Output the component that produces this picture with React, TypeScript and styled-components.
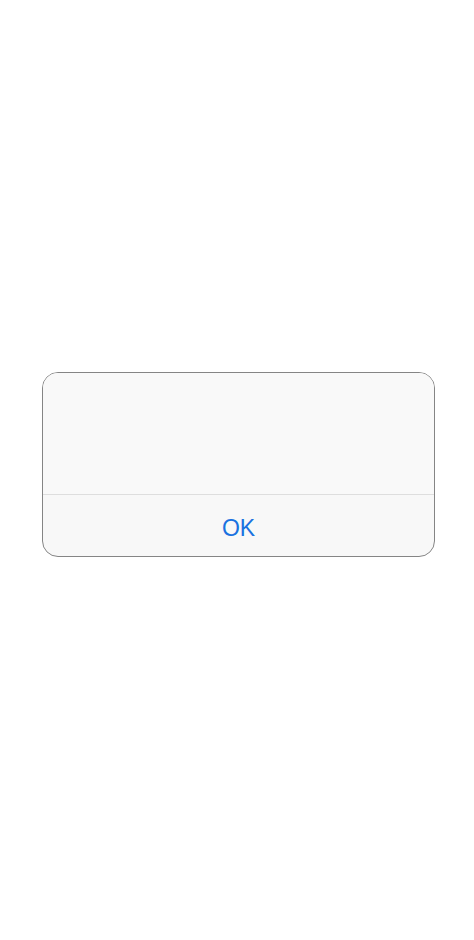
import React from "react";
import styled, { createGlobalStyle } from "styled-components";

const Global = createGlobalStyle`
  html, body { margin: 0; padding: 0; background: #ffffff; }
  body { font-family: "Helvetica Neue", "Liberation Sans", Arial, sans-serif; }
`;

const Page = styled.div`
  width: 474px;
  height: 940px;
  box-sizing: border-box;
  padding: 372px 40px 0 42px;
  background: #ffffff;
`;

const Dialog = styled.div`
  box-sizing: border-box;
  width: 393px;
  height: 185px;
  border: 1.5px solid #858585;
  border-radius: 16px;
  background: #f8f8f8;
  display: flex;
  flex-direction: column;
  overflow: hidden;
`;

const Body = styled.div`
  height: 121px;
  border-bottom: 1px solid #dedede;
  background: #f9f9f9;
`;

const Button = styled.button`
  flex: 1;
  border: none;
  background: transparent;
  color: #1a72e0;
  font-family: "Liberation Sans", Arial, sans-serif;
  font-size: 23px;
  padding: 6px 0 0 0;
  display: flex;
  align-items: center;
  justify-content: center;
  cursor: pointer;
`;

export default function App() {
  return (
    <>
      <Global />
      <Page>
        <Dialog>
          <Body />
          <Button>OK</Button>
        </Dialog>
      </Page>
    </>
  );
}
